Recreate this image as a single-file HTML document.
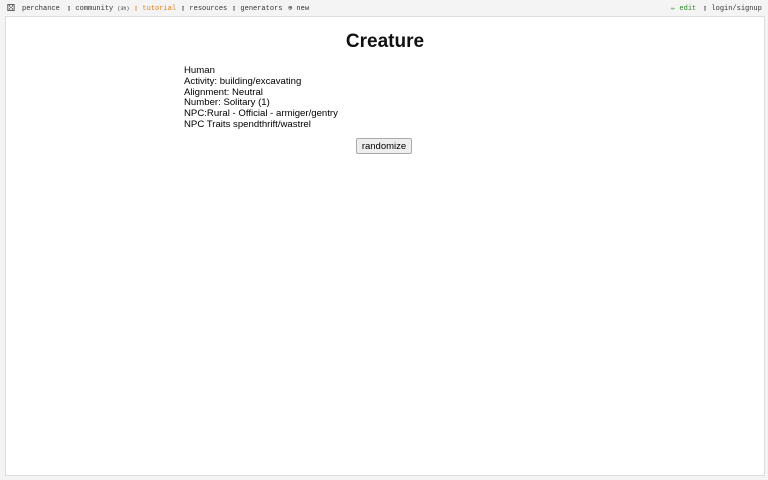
<!DOCTYPE html>
<html><head><style>
body{margin:0;width:768px;height:480px;background:#f4f4f4;font-family:"Liberation Sans",sans-serif;overflow:hidden;position:relative}
#bar{position:absolute;top:0;left:0;right:0;height:16px;font-family:"Liberation Mono",monospace;font-size:7px;color:#333;line-height:18px}
#bar span{position:absolute;white-space:nowrap}
#main{position:absolute;left:5px;top:16px;width:758px;height:458px;background:#fff;border:1px solid #ddd}
h1{position:absolute;top:14px;left:0;right:0;margin:0;text-align:center;font-size:19px;font-weight:bold;color:#111}
#out{position:absolute;left:178px;top:49px;font-size:9.6px;line-height:10.8px;color:#000}
button{position:absolute;left:350px;top:121px;width:56px;height:16px;font-family:"Liberation Sans",sans-serif;font-size:9.5px;background:#eee;border:1px solid #aaa;border-radius:2px;padding:0}
</style></head><body>
<div id="bar">
<span style="left:7px;font-size:13px;line-height:15px">⚄</span>
<span style="left:22px">perchance</span>
<span style="left:67px">▯ community <small style="font-size:5px">(3h)</small></span>
<span style="left:134px;color:#e08020">▯ tutorial</span>
<span style="left:181px">▯ resources</span>
<span style="left:232px">▯ generators</span>
<span style="left:288px">⊕ new</span>
<span style="left:671px;color:#2a8a2a">✏ edit</span>
<span style="left:703px">▯ login/signup</span>
</div>
<div id="main">
<h1>Creature</h1>
<div id="out">Human<br>Activity: building/excavating<br>Alignment: Neutral<br>Number: Solitary (1)<br>NPC:Rural - Official - armiger/gentry<br>NPC Traits spendthrift/wastrel</div>
<button>randomize</button>
</div>
</body></html>
